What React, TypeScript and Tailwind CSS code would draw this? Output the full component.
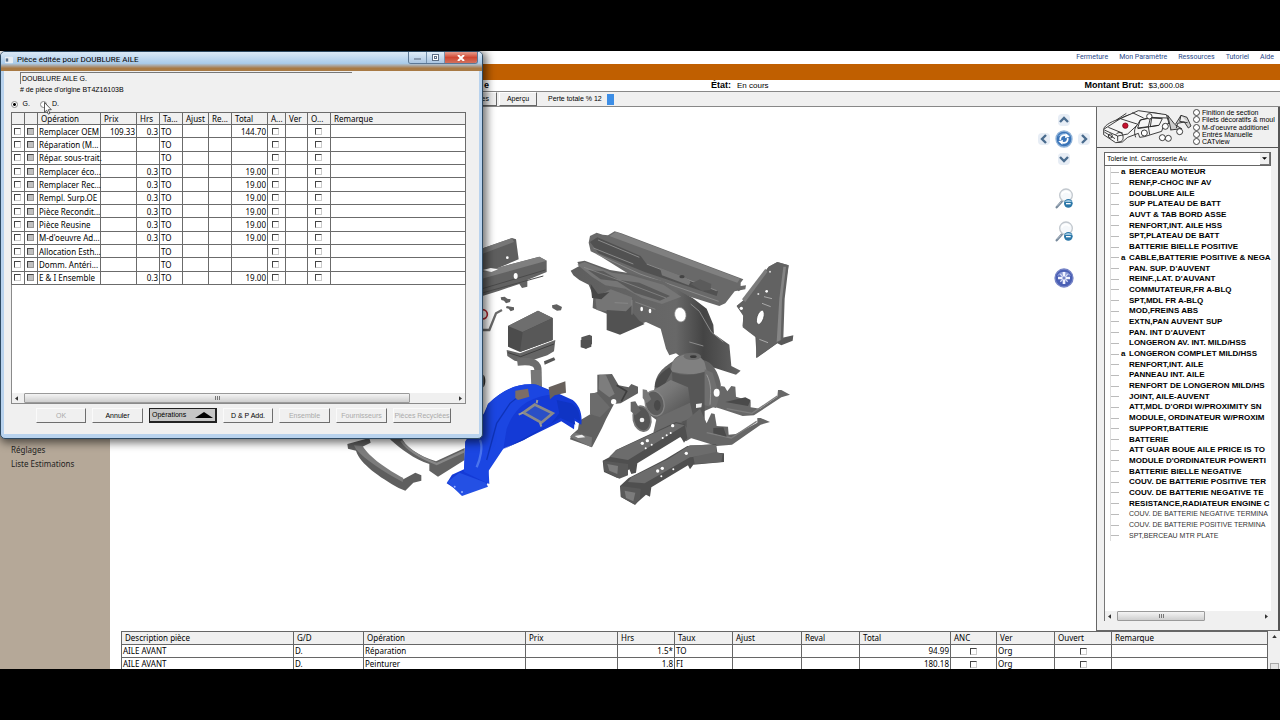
import type { ReactNode } from "react";

const SANS = "font-['Noto_Sans','Liberation_Sans',sans-serif]";
const ARIAL = "font-['Liberation_Sans',Arial,sans-serif]";

type Op = { name: string; prix?: string; hrs?: string; total?: string };

const operations: Op[] = [
  { name: "Remplacer OEM", prix: "109.33", hrs: "0.3", total: "144.70" },
  { name: "Réparation (M..." },
  { name: "Répar. sous-trait." },
  { name: "Remplacer éco...", hrs: "0.3", total: "19.00" },
  { name: "Remplacer Rec...", hrs: "0.3", total: "19.00" },
  { name: "Rempl. Surp.OE", hrs: "0.3", total: "19.00" },
  { name: "Pièce Recondit...", hrs: "0.3", total: "19.00" },
  { name: "Pièce Reusine", hrs: "0.3", total: "19.00" },
  { name: "M-d'oeuvre Ad...", hrs: "0.3", total: "19.00" },
  { name: "Allocation Esth..." },
  { name: "Domm. Antéri..." },
  { name: "E & I Ensemble", hrs: "0.3", total: "19.00" },
];

const parts: { label: string; mark?: boolean; light?: boolean }[] = [
  { label: "BERCEAU MOTEUR", mark: true },
  { label: "RENF,P-CHOC INF AV" },
  { label: "DOUBLURE AILE" },
  { label: "SUP PLATEAU DE BATT" },
  { label: "AUVT & TAB BORD ASSE" },
  { label: "RENFORT,INT. AILE HSS" },
  { label: "SPT,PLATEAU DE BATT" },
  { label: "BATTERIE BIELLE POSITIVE" },
  { label: "CABLE,BATTERIE POSITIVE & NEGA", mark: true },
  { label: "PAN. SUP. D'AUVENT" },
  { label: "REINF.,LAT. D'AUVANT" },
  { label: "COMMUTATEUR,FR A-BLQ" },
  { label: "SPT,MDL FR A-BLQ" },
  { label: "MOD,FREINS ABS" },
  { label: "EXTN,PAN AUVENT SUP" },
  { label: "PAN. INT D'AUVENT" },
  { label: "LONGERON AV. INT. MILD/HSS" },
  { label: "LONGERON COMPLET MILD/HSS", mark: true },
  { label: "RENFORT,INT. AILE" },
  { label: "PANNEAU INT. AILE" },
  { label: "RENFORT DE LONGERON MILD/HS" },
  { label: "JOINT, AILE-AUVENT" },
  { label: "ATT,MDL D'ORDI W/PROXIMITY SN" },
  { label: "MODULE, ORDINATEUR W/PROXIM" },
  { label: "SUPPORT,BATTERIE" },
  { label: "BATTERIE" },
  { label: "ATT GUAR BOUE AILE PRICE IS TO" },
  { label: "MODULE D'ORDINATEUR POWERTI" },
  { label: "BATTERIE BIELLE NEGATIVE" },
  { label: "COUV. DE BATTERIE POSITIVE TER" },
  { label: "COUV. DE BATTERIE NEGATIVE TE" },
  { label: "RESISTANCE,RADIATEUR ENGINE C" },
  { label: "COUV. DE BATTERIE NEGATIVE TERMINA", light: true },
  { label: "COUV. DE BATTERIE POSITIVE TERMINA", light: true },
  { label: "SPT,BERCEAU MTR PLATE", light: true },
];

const lines = [
  { part: "AILE AVANT", side: "D.", op: "Réparation", hrs: "1.5*", rate: "TO", total: "94.99" },
  { part: "AILE AVANT", side: "D.", op: "Peinturer", hrs: "1.8", rate: "FI", total: "180.18" },
];

function Tick({ label, shaded }: { label: string; shaded?: boolean }) {
  return (
    <input
      type="checkbox"
      aria-label={label}
      className={
        shaded
          ? "block size-[7px] appearance-none border border-[#444] border-r-[#999] border-b-[#999] bg-[#c0c0c0]"
          : "block size-[7px] appearance-none border border-[#444] border-r-[#ccc] border-b-[#ccc] bg-white"
      }
    />
  );
}

function ScrollBar({ thumb }: { thumb: string }) {
  return (
    <div className="flex h-[10px] items-center bg-[#f0f0f0] px-[3px]">
      <svg viewBox="0 0 4 6" className="h-[5px] w-[3px]"><path d="M4 0 0 3l4 3z" fill="#333" /></svg>
      <div className="mx-[6px] flex h-full flex-1">
        <div className={`flex h-full items-center justify-center gap-px rounded-[1px] border border-[#9a9a9a] bg-linear-to-b from-[#f4f4f4] to-[#cfcfcf] ${thumb}`}>
          <span className="h-[4px] w-px bg-[#777]" />
          <span className="h-[4px] w-px bg-[#777]" />
          <span className="h-[4px] w-px bg-[#777]" />
        </div>
      </div>
      <svg viewBox="0 0 4 6" className="h-[5px] w-[3px]"><path d="m0 0 4 3-4 3z" fill="#333" /></svg>
    </div>
  );
}

function PushButton({ width, disabled, children }: { width: string; disabled?: boolean; children: ReactNode }) {
  return (
    <button
      type="button"
      disabled={disabled}
      className={`h-[15px] border border-[#fafafa] border-r-[#6e6e6e] border-b-[#6e6e6e] bg-[#f0f0f0] text-center text-[7px] leading-[12px] whitespace-nowrap text-black disabled:text-[#aaa] ${width}`}
    >
      {children}
    </button>
  );
}

function EditDialog() {
  return (
    <section
      role="dialog"
      aria-label="Pièce éditée pour DOUBLURE AILE"
      className="absolute top-0 left-0 flex h-[388px] w-[483px] flex-col rounded-[5px] border border-[#2e4a63] bg-[#b9d3ee] px-[3px] pb-[4px] shadow-[2px_2px_8px_2px_rgba(0,0,0,0.55)]"
    >
      <header className="-mx-[3px] flex h-[19px] items-start rounded-t-[4px] bg-linear-to-b from-[#dbe9f6] from-0% via-[#a9cbea] via-60% to-[#a87a45] to-85% pr-[4px] pl-[4px]">
        <div className="flex flex-1 items-center gap-[4px] pt-[2px] font-['Roboto','Noto_Sans',sans-serif] text-[8px] leading-[12px] text-black">
          <svg viewBox="0 0 10 8" className="h-[8px] w-[8px]">
            <rect width="10" height="8" rx="1" fill="#e8eef4" />
            <rect x="1" y="2" width="3" height="4" fill="#56708c" />
          </svg>
          Pièce éditée pour DOUBLURE AILE
        </div>
        <div className="flex h-[12px] overflow-hidden rounded-b-[3px] border border-t-0 border-[#5c7896]">
          <button type="button" aria-label="Réduire" className="flex w-[18px] items-end justify-center border-r border-[#7591ad] bg-linear-to-b from-[#e0ecf7] to-[#aac6e2] pb-[3px]">
            <span className="h-[2px] w-[7px] border border-[#8a9bb0] bg-white" />
          </button>
          <button type="button" aria-label="Agrandir" className="flex w-[18px] items-center justify-center border-r border-[#7591ad] bg-linear-to-b from-[#e0ecf7] to-[#aac6e2]">
            <span className="flex size-[7px] items-center justify-center border border-[#5d6f86] bg-white"><span className="size-[3px] border border-[#5d6f86]" /></span>
          </button>
          <button type="button" aria-label="Fermer" className="flex w-[32px] items-center justify-center bg-linear-to-b from-[#e59a8c] via-[#cf4632] to-[#d1705c]">
            <svg viewBox="0 0 8 6" className="h-[6px] w-[8px]"><path d="m1 0 6 6M7 0 1 6" stroke="#fff" strokeWidth="2" /></svg>
          </button>
        </div>
      </header>

      <div className={`flex min-h-0 flex-1 flex-col bg-[#f0f0f0] pr-[13px] pl-[7px] text-[7px] text-black ${ARIAL}`}>
        <div className="mt-px ml-[9px] flex w-[332px] flex-col">
          <p className="h-[12px] border-t border-l border-[#777] pl-px leading-[12px]">DOUBLURE AILE G.</p>
          <p className="h-[12px] leading-[12px]"># de pièce d'origine BT4Z16103B</p>
        </div>
        <div className="relative flex h-[16px] items-center gap-[10px]">
          <label className="flex w-[19px] items-center justify-between">
            <input type="radio" name="side" defaultChecked className="size-[7px] appearance-none rounded-full border border-[#888] bg-white bg-[radial-gradient(#000_35%,transparent_45%)]" />
            G.
          </label>
          <label className="flex w-[19px] items-center justify-between">
            <input type="radio" name="side" className="size-[7px] appearance-none rounded-full border border-[#888] bg-white" />
            D.
          </label>
          <svg viewBox="0 0 8 13" className="absolute top-[6px] left-[33px] h-[13px] w-[8px]">
            <path d="M.5.5v9.7l2.2-2 1.6 3.9 1.6-.7-1.6-3.7h3z" fill="#fff" stroke="#333" strokeWidth=".8" />
          </svg>
        </div>

        <div className="flex h-[292px] flex-col bg-white">
          <table className={`h-[173px] w-full table-fixed border-collapse text-[8px] leading-[11px] ${SANS}`}>
            <colgroup>
              <col className="w-[13px]" /><col className="w-[13px]" /><col className="w-[63px]" />
              <col className="w-[36px]" /><col className="w-[23px]" /><col className="w-[23px]" />
              <col className="w-[26px]" /><col className="w-[23px]" /><col className="w-[36px]" />
              <col className="w-[18px]" /><col className="w-[22px]" /><col className="w-[23px]" /><col />
            </colgroup>
            <thead>
              <tr className="bg-[#f0f0f0] text-left [&>th]:border [&>th]:border-[#6b6b6b] [&>th]:p-0 [&>th]:pl-[3px] [&>th]:font-normal [&>th]:whitespace-nowrap">
                <th /><th /><th>Opération</th><th>Prix</th><th>Hrs</th><th>Ta...</th><th>Ajust</th><th>Re...</th><th>Total</th><th>A...</th><th>Ver</th><th>O...</th><th>Remarque</th>
              </tr>
            </thead>
            <tbody>
              {operations.map((o) => (
                <tr key={o.name} className="[&>td]:border [&>td]:border-[#6b6b6b] [&>td]:p-0 [&>td]:px-px [&>td]:whitespace-nowrap">
                  <td><div className="pl-px"><Tick label={`Choisir ${o.name}`} /></div></td>
                  <td><div className="pl-px"><Tick label={`Inclure ${o.name}`} shaded /></div></td>
                  <td>{o.name}</td>
                  <td className="text-right">{o.prix}</td>
                  <td className="text-right">{o.hrs}</td>
                  <td>TO</td>
                  <td /><td />
                  <td className="text-right">{o.total}</td>
                  <td><div className="pl-[3px]"><Tick label={`ANC ${o.name}`} /></div></td>
                  <td />
                  <td><div className="pl-[6px]"><Tick label={`Ouvert ${o.name}`} /></div></td>
                  <td />
                </tr>
              ))}
            </tbody>
          </table>
          <div className="flex flex-1 flex-col justify-end border-x border-b border-[#8a8a8a]"><ScrollBar thumb="w-[90%]" /></div>
        </div>

        <div className="mt-[4px] flex gap-[6px] pl-[25px]">
          <PushButton width="w-[50px]" disabled>OK</PushButton>
          <PushButton width="w-[51px]">Annuler</PushButton>
          <button type="button" className="flex h-[15px] w-[68px] items-center justify-between border border-r-2 border-b-2 border-[#222] bg-[#c6c6c6] px-[2px] text-[7px] leading-[12px]">
            Opérations
            <svg viewBox="0 0 18 6" className="h-[6px] w-[18px]"><path d="M0 6 9 0l9 6z" /></svg>
          </button>
          <PushButton width="w-[50px]">D &amp; P Add.</PushButton>
          <PushButton width="w-[51px]" disabled>Ensemble</PushButton>
          <PushButton width="w-[51px]" disabled>Fournisseurs</PushButton>
          <PushButton width="w-[58px]" disabled>Pièces Recyclées</PushButton>
        </div>
      </div>
    </section>
  );
}

function ExplodedView() {
  return (
    <svg viewBox="110 107 986 524" preserveAspectRatio="xMinYMin meet" className="absolute inset-0 size-full">
      <defs>
        <linearGradient id="steel" x1="0" y1="0" x2="0" y2="1">
          <stop offset="0" stopColor="#747474" /><stop offset="1" stopColor="#535353" />
        </linearGradient>
        <linearGradient id="cyl" x1="0" y1="0" x2="1" y2="1">
          <stop offset="0" stopColor="#868686" /><stop offset=".4" stopColor="#777" /><stop offset="1" stopColor="#4c4c4c" />
        </linearGradient>
        <linearGradient id="cowl" x1="0" y1="0" x2="1" y2="0">
          <stop offset="0" stopColor="#5e5e5e" /><stop offset=".62" stopColor="#686868" /><stop offset=".78" stopColor="#444" /><stop offset="1" stopColor="#646464" />
        </linearGradient>
      </defs>

      {/* upper cowl, dash panel, battery and side bracket */}
      <g transform="translate(480 220) scale(.33333)">
        <path d="M0 88 96 54l12 4 8 60L40 150 0 158z" fill="#5e5e5e" />
        <path d="M0 88 96 54l6 12L0 104z" fill="#777" />
        <path d="M0 158 178 110l22 12v34l-58 24v20l-16 4-8-12-60 20-58 18z" fill="#626262" />
        <path d="M0 158 178 110l22 12L0 178z" fill="#7f7f7f" />
        <path d="M0 208 196 150M10 218l180-50" stroke="#4a4a4a" strokeWidth="3" />
        <circle cx="82" cy="113" r="4" fill="#fff" /><ellipse cx="107" cy="168" rx="6" ry="9" fill="#fff" />
        <path d="m8 150 24-6 22 4-20 8z" fill="#fff" />
        <path d="m62 232 12-2 8 6 10 2-2 8-12 4-6-8-8-2zM80 258l22 4v8l-10 4-6-8-8-2zM216 256l14-3 16 8-3 10-12 1-14-8z" fill="#606060" />
        <path d="M0 330h28l20-50 18-10" fill="none" stroke="#6a6a6a" strokeWidth="7" />
        <circle cx="8" cy="283" r="14" fill="none" stroke="#b0242d" strokeWidth="5" />

        <path d="m326 68 4-20 20-10 18 6 16 2 20-12 20 6 366 138-8 10v10l16-2-2 12-32 6-28 36-18 8-88-28-180-66-96-60-22-10z" fill="#696969" />
        <path d="m388 48 20-12 372 140-8 12-140-50z" fill="#808080" />
        <path d="m330 66 22-14 130 56 16 22 120 48 96 36-4 14-216-72-138-56z" fill="#515151" />
        <path d="m354 60 124 52M340 84l120 48M500 132l210 80M350 102l130 60 236 82" fill="none" stroke="#8a8a8a" strokeWidth="3" />
        <path d="m540 144 78 30 14 12-6 10-80-30z" fill="#777" />
        <path d="m632 192 28-14 34 14-2 18-26 2z" fill="#5b5b5b" />
        <ellipse cx="606" cy="170" rx="8" ry="5" fill="#444" /><path d="m770 208 26-10-20 16z" fill="#666" />

        <path d="m272 152 26-14-6-12 22-4 76 28 60 10 100 24 58 34 30 16 42 32 20 48 2 28 46 32 6 64 28 14-14 12-70-22-60-22-10 10-40-30-20 6-10-20-16-60-44-20-72 26-42-14-2-36-44-18 2-36-14-34-28-14-18-14z" fill="url(#cowl)" />
        <path d="m292 134 22-8 82 32 56 8 98 28 54 36-58 22-60-18-50-28-60-10-40-26z" fill="#767676" />
        <path d="m324 150 46 4 48 26 60 8 92 40-30 14-76-24-52-34-50-6z" fill="#5a5a5a" />
        <path d="m346 232 46-24 64 24v26l-22 22-84-10z" fill="#757575" />
        <path d="m380 270 58 4 18-18 2 22 20 24 16 10-74 32-40-14z" fill="#525252" />
        <path d="m332 192 22 30 34-6-24 22-28-4z" fill="#474747" />
        <path d="m404 248 40 2M312 142l120 44 126 48M456 240v44M466 246l60 22" fill="none" stroke="#909090" strokeWidth="2" />
        <ellipse cx="601" cy="284" rx="17" ry="22" transform="rotate(-12 601 284)" fill="#fff" stroke="#888" strokeWidth="2" />
        <ellipse cx="485" cy="267" rx="4" ry="7" fill="#fff" /><ellipse cx="510" cy="273" rx="4" ry="7" fill="#fff" />
        <path d="m628 366 42 12M632 252l26 22 36 62 36 30" fill="none" stroke="#8c8c8c" strokeWidth="3" />

        <path d="m770 258 26-22 70-96 26-14 34 10-6 34-12 66-4 118 36-8-2 16-34 14-12-6-62 44-4-66-18-12-20-18 2-34z" fill="url(#steel)" />
        <path d="m770 258 26-22 70-96 26-14 34 10-12 100-4 120-82 58 2-60-42-32 2-34z" fill="#626262" />
        <path d="m918 140-12 100-4 120-12 6 8-130 12-96z" fill="#858585" />
        <path d="m856 146-70 92 10 8 66-90z" fill="#7c7c7c" />
        <ellipse cx="841" cy="292" rx="10" ry="22" transform="rotate(18 841 292)" fill="#fff" stroke="#444" strokeWidth="2" />
        <circle cx="860" cy="214" r="4" fill="#fff" /><circle cx="835" cy="222" r="3" fill="#ddd" /><circle cx="784" cy="265" r="5" fill="#fff" /><circle cx="870" cy="155" r="3" fill="#ddd" />
        <path d="m846 250 26 10M852 230l24 6M838 358l26 10" stroke="#aaa" strokeWidth="3" />

        <path d="m84 318 90-46 44 22v66l-98 36-36-16z" fill="#4c4c4c" />
        <path d="m84 318 90-46 44 22-90 42z" fill="#6e6e6e" /><path d="m128 336 90-42v66l-98 36z" fill="#585858" />
        <path d="m80 390 40 10 106-40-4 34-20 12-68 22-30-6-22-14z" fill="#656565" />
        <path d="m84 398 38 12 100-38" fill="none" stroke="#3f3f3f" strokeWidth="3" />
        <path d="M112 426c50-6 64 6 62 30v60" fill="none" stroke="#6c6c6c" strokeWidth="22" />
        <path d="m192 424 30-12 4 8-32 14zM304 352l24-8 8 4v24l-18 14-14-6z" fill="#565656" />
      </g>

      {/* strut tower, rails and brackets */}
      <g transform="translate(560 340) scale(.33333)">
        <path d="M62 0h32v20l-16 6-16-4z" fill="#505050" />
        <path d="m112 104 44-2 20 34 30 6 8-10 20 8v20l-52 30-20 2-24 46-12 26-30 58-66-24 4-12 20-18 4-26 34-20-2-58 22-8z" fill="#606060" />
        <path d="m118 104 20 2 26 56-16 10-32-24z" fill="#7d7d7d" /><path d="m90 160 20-2 40 44-30 30-30-10z" fill="#6c6c6c" />
        <path d="m30 290 14-12 52 14-2 30z" fill="#787878" />
        <circle cx="161" cy="185" r="8" fill="#fff" /><path d="m44 288 22-4 10 8-22 2z" fill="#eee" /><path d="m170 136 30 18-16 30" fill="none" stroke="#3e3e3e" strokeWidth="5" />
        <path d="M284 142c2-50 40-66 56-80 20-30 70-30 88-2 30 4 48 40 54 72l4 58-54 24-4 60-50 30-110-80z" fill="#646464" />
        <path d="m432 186 46-36 6-12 10 2 8 14 12-16 12 2 2 30 44 14v18l28 4 52-36 2-20h10l26 14-26 8-82 54-34 2-66-22-50-14z" fill="#686868" />
        <path d="M336 72c10-36 82-40 98-4l6 24c-30 14-74 12-108 2z" fill="#808080" />
        <ellipse cx="397" cy="49" rx="26" ry="11" fill="#6a6a6a" /><ellipse cx="400" cy="50" rx="10" ry="4" fill="#3a3a3a" />
        <path d="M336 96c30 12 60 12 98 0v140l-50 30-40-40z" fill="#565656" />
        <path d="m434 88 24 10 20 72-10 34-34-8z" fill="#6f6f6f" /><path d="M440 104c16 30 12 60 10 90" fill="none" stroke="#999" strokeWidth="3" />
        <ellipse cx="470" cy="158" rx="9" ry="12" fill="#fff" />
        <path d="M284 142c4-30 16-40 44-60l8 12-28 50z" fill="#4a4a4a" />
        <path d="m262 162 70-42 52 22 8 56-84 34z" fill="url(#cyl)" />
        <ellipse cx="284" cy="190" rx="28" ry="38" transform="rotate(-15 284 190)" fill="#5c5c5c" stroke="#858585" strokeWidth="4" />
        <ellipse cx="292" cy="196" rx="10" ry="16" fill="#494949" />
        <path d="m248 148 12 2 14 28-14 12-12-16z" fill="#777" />
        <path d="m290 234 100-46 10 44-120 46z" fill="#6b6b6b" />
        <ellipse cx="246" cy="236" rx="26" ry="38" transform="rotate(-12 246 236)" fill="#555" stroke="#777" strokeWidth="5" />
        <circle cx="246" cy="240" r="7" fill="#eee" /><path d="m212 186 14-2 16 28-16 14-14-12z" fill="#666" />
        <path d="m496 186 60-14 16 8-8 18z" fill="#4a4a4a" />
        <path d="m380 240 40-34 20 44 14-30 10 2 6 36 34 2 2 24 22-2 64-34v-14h10l28 12-28 8-86 60-46 4-90-28z" fill="#666" />
        <path d="m408 192 18-2-2 12-16 2z" fill="#eee" />
        <path d="m440 278 74 16 76-50M500 206l76 14 76-52" fill="none" stroke="#7e7e7e" strokeWidth="4" /><path d="m460 264 30-2 10 28-40-10z" fill="#4b4b4b" />

        <path d="m128 362 20-10 20-22 180-84 26 6 8 42-10 14-10-18-130 80-4 28-14 4-6-14-36 26-40-18z" fill="#4f4f4f" />
        <path d="m148 350 22-20 178-80 26 6-170 104z" fill="#6c6c6c" />
        <path d="m130 362 74 10v34l-26 10-46-24z" fill="#595959" /><path d="m142 372 32 6-2 24-24-10z" fill="#7c7c7c" />
        <g fill="#fff"><circle cx="247" cy="310" r="5" /><circle cx="262" cy="302" r="5" /><circle cx="338" cy="257" r="5" /><circle cx="257" cy="325" r="3" /><circle cx="275" cy="314" r="3" /><circle cx="308" cy="294" r="3" /><circle cx="320" cy="286" r="3" /><circle cx="332" cy="279" r="3" /></g>
        <path d="m180 438 26-24 110-56 66-40 86-6 4 26 20 2v26l-92 8-10 14-6-12-110 66-4 28-12-6-34 30-42-24z" fill="#4f4f4f" />
        <path d="m204 426 10-14 110-54 66-42 78-2 2 30-80 8-136 78z" fill="#6c6c6c" />
        <path d="m182 438 60 8-2 30-14 18-42-22z" fill="#595959" /><path d="m194 452 32 6-6 26-22-10z" fill="#7c7c7c" />
        <path d="m400 350 68-14 20 6-4 24-80 6z" fill="#636363" />
        <g fill="#fff"><circle cx="293" cy="393" r="5" /><circle cx="307" cy="385" r="5" /><circle cx="379" cy="340" r="5" /><circle cx="304" cy="409" r="3" /><circle cx="340" cy="388" r="3" /></g>
      </g>

      {/* highlighted inner fender and sub-frame */}
      <g transform="translate(340 370) scale(.33333)">
        <path d="m22 222 66-18 4 14-28 14c20 34 80 74 126 96l36-20 18 8v16l-24 6-24 24-20-8C120 322 60 282 48 242l-24-6z" fill="#5e5e5e" />
        <path d="m42 226 26 2c20 34 76 72 122 96l-2 12C130 306 74 268 48 238z" fill="#7c7c7c" />
        <path d="m150 208 34-8c10 30 50 56 104 74l86-40v36l-80 50-26-18v-20c-46-14-84-44-118-74z" fill="#626262" />
        <path d="m184 212c20 30 60 52 106 70l82-38" fill="none" stroke="#888" strokeWidth="7" />
        <path d="M572 0h30l4 50-20 10-12-8z" fill="#777" />
        <path d="m432 130 12-28c50-50 100-64 146-58l60 24 48 22c20 16 30 40 26 74l-20-12-2 26-38-24-122 60-80 34-14 24-6 70-76 28-46-30 16-26 36-16 4-84z" fill="#143ad6" />
        <path d="M444 102c50-50 100-64 146-58l58 28c-70 6-120 30-148 104l-10 60-44 66 2 40-76-36 4-90 60-86z" fill="#1b46e2" />
        <path d="m560 60-50 40-40 60-30 110" fill="none" stroke="#0f33b8" strokeWidth="4" />
        <path d="m420 210c10 20 0 60-10 82" fill="none" stroke="#4a74ee" strokeWidth="7" />
        <path d="m484 240 20-10 130-70 24-30-8-40 44 10c20 12 26 30 26 54l-18-10 4 20-44-20-110 66-68 30z" fill="#0f34c4" />
        <path d="m322 336 36-28 80 30 6 12-78 28z" fill="#2450e4" /><circle cx="344" cy="350" r="3" fill="#9bb4ff" /><circle cx="366" cy="366" r="3" fill="#9bb4ff" />
        <path d="m550 128 34-24 54 26-34 28z" fill="#2a4fc6" stroke="#8a8a8a" strokeWidth="8" />
        <path d="m550 128-14 6M590 100l2-10M600 158l4 12" stroke="#999" strokeWidth="6" />
        <path d="m526 62 38-6 4 24-34 10-8-6z" fill="#7b6d66" /><path d="m626 52 50-18 2 34-34 8-14 12z" fill="#68615c" />
        <path d="M430 14c8 6 8 30 0 38z" fill="#333" />
      </g>
    </svg>
  );
}

function Chevron({ d, label }: { d: string; label: string }) {
  return (
    <button type="button" aria-label={label} className="flex size-[12px] items-center justify-center rounded-[4px] bg-[#e7edf5]">
      <svg viewBox="0 0 12 12" className="size-[12px]"><path d={d} fill="none" stroke="#4a6c8e" strokeWidth="2.4" /></svg>
    </button>
  );
}

function Magnifier({ label }: { label: string }) {
  return (
    <button type="button" aria-label={label} className="h-[22px] w-[20px]">
      <svg viewBox="0 0 60 66" className="h-[22px] w-[20px]">
        <path d="M8 58 24 40" stroke="#77899b" strokeWidth="7" strokeLinecap="round" />
        <path d="M9 55 22 41" stroke="#c3ccd6" strokeWidth="2" />
        <circle cx="36" cy="22" r="19" fill="#f5f8fb" stroke="#c2c8ce" strokeWidth="4" />
        <path d="M23 20c4-10 16-12 24-4" fill="none" stroke="#fff" strokeWidth="5" />
        <circle cx="43" cy="46" r="13" fill="#2b77a8" />
        <path d="M32 42a12 10 0 0 1 22 0z" fill="#9dc8e2" />
        <path d="M36 47h14" stroke="#fff" strokeWidth="4" />
      </svg>
    </button>
  );
}

function ViewControls() {
  return (
    <nav aria-label="Navigation du dessin" className="absolute top-[7px] right-[6px] flex w-[52px] flex-col items-center">
      <Chevron label="Haut" d="m2 8 4-4 4 4" />
      <div className="mt-[4px] mb-[5px] flex w-full items-center justify-between">
        <Chevron label="Gauche" d="M8 2 4 6l4 4" />
        <button type="button" aria-label="Recentrer" className="size-[18px]">
          <svg viewBox="0 0 54 54" className="size-[18px]">
            <circle cx="27" cy="27" r="24" fill="#3a74b8" stroke="#8fb2d8" strokeWidth="4" />
            <path d="M8 20a22 20 0 0 1 38 0c-12-6-26-6-38 0z" fill="#86b0de" />
            <path d="M16 30c-2-12 10-18 20-12M38 24c2 12-8 18-20 12" fill="none" stroke="#fff" strokeWidth="5" />
            <path d="m32 10 12 10-14 4zM22 44 10 34l14-4z" fill="#fff" />
          </svg>
        </button>
        <Chevron label="Droite" d="m4 2 4 4-4 4" />
      </div>
      <Chevron label="Bas" d="m2 4 4 4 4-4" />
      <div className="mt-[23px] flex flex-col items-center gap-[11px]">
        <Magnifier label="Zoom avant" />
        <Magnifier label="Zoom arrière" />
      </div>
      <button type="button" aria-label="Ajuster" className="mt-[25px] size-[20px]">
        <svg viewBox="0 0 60 60" className="size-[20px]">
          <circle cx="30" cy="30" r="27" fill="#4a5fb4" stroke="#7684c6" strokeWidth="4" />
          <path d="M9 24a23 22 0 0 1 42 0c-14-6-28-6-42 0z" fill="#8b9ad6" />
          <path d="M30 12v36M12 30h36" stroke="#f2f4ff" strokeWidth="8" />
          <path d="m19 19 7 7M41 19l-7 7M19 41l7-7M41 41l-7-7" stroke="#d5dbf4" strokeWidth="4" />
          <path d="M30 25v10M25 30h10" stroke="#4a5fb4" strokeWidth="3" />
        </svg>
      </button>
    </nav>
  );
}

function CarDiagram() {
  return (
    <svg viewBox="252 198 270 105" className="h-[35px] w-[90px] shrink-0" fill="none" stroke="#222" strokeWidth="2.6">
      <path d="M254 256c2-14 30-26 50-32 20-12 50-20 84-18 24 0 44 4 54 14l8 18" fill="#f6f6f6" />
      <path d="M254 256v16l36 24 20-2 16-14 32-12 4 12 14-2 52-16 6-18 16-6-8-26-84-12-54 24z" fill="#f6f6f6" />
      <path d="m256 258 40 18 30-6 28-26 10-16 30-8 50 2M304 224l50 16M296 276v16M256 264l32 20M268 250l44 18" />
      <path d="M354 244c-10 10-8 24-4 36M364 228l-8 24 32-4 6-26zM398 222l-4 26 26-4 10-20zM356 254l62-10M388 248l4 24" />
      <path d="M290 272c8-10 20-8 22 4s-4 18-14 18M322 208l-30 20M340 206l34 16" />
      <circle cx="274" cy="276" r="6" /><circle cx="391" cy="217" r="8" fill="#fff" />
      <circle cx="376" cy="267" r="9" fill="#fff" /><circle cx="439" cy="247" r="9" fill="#fff" />
      <circle cx="430" cy="281" r="9" fill="#fff" /><circle cx="448" cy="283" r="9" fill="#fff" />
      <path d="m446 214 22 28 20 12-34 4M446 214l10 44M470 240l16-26 18 6 12 26-8 6-12-18-20 4-4 14M486 214l-4 18 24 4" fill="#ccc" />
      <circle cx="482" cy="263" r="9" fill="#fff" />
      <circle cx="319" cy="245" r="8" fill="#c8102e" stroke="#7e0a1c" />
    </svg>
  );
}

function PartsPanel() {
  const modes = ["Finition de section", "Filets décoratifs & moul", "M-d'oeuvre additionel", "Entrés Manuelle", "CATview"];
  return (
    <aside className={`flex w-[184px] shrink-0 flex-col overflow-hidden border-r-2 border-b border-l border-[#666] border-r-[#555] bg-[#f0f0f0] text-[8px] text-black ${ARIAL}`}>
      <div className="flex h-[41px] shrink-0 items-center border-b border-[#555] pl-[6px]">
        <CarDiagram />
        <div className="flex h-[37px] shrink-0 flex-col">
          {modes.map((m) => (
            <label key={m} className="flex min-h-0 flex-1 items-center gap-[2px] text-[7px] leading-[7px] whitespace-nowrap">
              <input type="radio" name="mode" className="size-[7px] appearance-none rounded-full border border-[#444] bg-white" />
              {m}
            </label>
          ))}
        </div>
      </div>
      <div className="flex min-h-0 flex-1 flex-col pt-[4px] pr-[7px] pb-[9px] pl-[7px]">
        <div className="relative">
          <select aria-label="Section" className="block h-[14px] w-full appearance-none border border-[#666] bg-white pl-[2px] text-[7px] leading-[12px]">
            <option>Tolerie int. Carrosserie Av.</option>
          </select>
          <span className="pointer-events-none absolute top-px right-px flex h-[12px] w-[10px] items-center justify-center border-r border-b border-[#777] bg-[#f0f0f0]">
            <svg viewBox="0 0 6 3" className="h-[3px] w-[5px]"><path d="M0 0h6L3 3z" /></svg>
          </span>
        </div>
        <div className="flex min-h-0 flex-1 flex-col border-l border-[#777] bg-white pt-px">
          <ul className="flex h-[374px] shrink-0 flex-col overflow-hidden">
            {parts.map((p, i) => (
              <li key={i} className="flex min-h-0 flex-1 items-center">
                <span className="ml-[5px] flex h-full w-[9px] shrink-0 items-center border-l border-[#ddd]"><span className="h-px w-full bg-[#bbb]" /></span>
                <span className="w-[10px] shrink-0 pl-[2px] text-[8px] leading-[10px] font-bold">{p.mark ? "a" : ""}</span>
                <a href="#" className={p.light ? "text-[7px] leading-[10px] whitespace-nowrap text-[#333]" : "leading-[10px] font-bold whitespace-nowrap"}>{p.label}</a>
              </li>
            ))}
          </ul>
          <div className="mt-auto"><ScrollBar thumb="w-[62%]" /></div>
        </div>
      </div>
    </aside>
  );
}

function EstimateTable() {
  return (
    <div className="flex h-[38px] shrink-0 overflow-hidden bg-[#f0f0f0]">
      <div className="w-[11px] shrink-0 bg-white" />
      <div className="flex-1">
        <table className={`w-full table-fixed border-collapse bg-white text-[8px] leading-[12px] text-black ${SANS}`}>
          <colgroup>
            <col className="w-[172px]" /><col className="w-[70px]" /><col className="w-[162px]" /><col className="w-[92px]" />
            <col className="w-[57px]" /><col className="w-[58px]" /><col className="w-[69px]" /><col className="w-[58px]" />
            <col className="w-[91px]" /><col className="w-[46px]" /><col className="w-[58px]" /><col className="w-[57px]" /><col />
          </colgroup>
          <thead>
            <tr className="bg-[#f0f0f0] text-left [&>th]:border [&>th]:border-[#666] [&>th]:p-0 [&>th]:pl-[3px] [&>th]:font-normal">
              <th>Description pièce</th><th>G/D</th><th>Opération</th><th>Prix</th><th>Hrs</th><th>Taux</th><th>Ajust</th><th>Reval</th><th>Total</th><th>ANC</th><th>Ver</th><th>Ouvert</th><th>Remarque</th>
            </tr>
          </thead>
          <tbody>
            {lines.map((l) => (
              <tr key={l.op} className="[&>td]:border [&>td]:border-[#666] [&>td]:p-0 [&>td]:px-px">
                <td>{l.part}</td><td>{l.side}</td><td>{l.op}</td><td />
                <td className="text-right">{l.hrs}</td><td>{l.rate}</td><td /><td />
                <td className="text-right">{l.total}</td>
                <td><div className="flex justify-center"><Tick label={`ANC ${l.op}`} /></div></td>
                <td>Org</td>
                <td><div className="flex justify-center"><Tick label={`Ouvert ${l.op}`} /></div></td>
                <td />
              </tr>
            ))}
          </tbody>
        </table>
      </div>
      <div className="flex w-[12px] shrink-0 flex-col items-center justify-between pt-[4px]">
        <svg viewBox="0 0 6 4" className="h-[3px] w-[5px]"><path d="M0 4 3 0l3 4z" fill="#333" /></svg>
        <span className="h-[6px] w-[9px] border border-b-0 border-[#aaa] bg-[#e6e6e6]" />
      </div>
    </div>
  );
}

export default function App() {
  return (
    <div className="flex h-screen flex-col bg-black py-[51px]">
      <main className={`relative flex min-h-0 flex-1 flex-col overflow-hidden bg-white text-[8px] text-black ${ARIAL}`}>
        <nav className="flex h-[13px] shrink-0 justify-end gap-[11px] pr-[6px] font-['Roboto','Liberation_Sans',sans-serif] text-[7px] leading-[13px] text-[#1f4788]">
          <a href="#">Fermeture</a>
          <a href="#">Mon Paramètre</a>
          <a href="#">Ressources</a>
          <a href="#">Tutoriel</a>
          <a href="#">Aide</a>
        </nav>
        <div className="h-[16px] shrink-0 bg-[#c05f00]" />
        <div className="flex h-[11px] shrink-0 items-center pr-[96px] pl-[484px] text-[8px] leading-[11px]">
          <b className="w-[227px] text-[9px]">e</b>
          <p className="flex-1"><b className="mr-[6px] text-[9px]">État:</b>En cours</p>
          <p><b className="mr-[5px] text-[9px]">Montant Brut:</b>$3,600.08</p>
        </div>
        <div className="flex h-[16px] shrink-0 items-center border-y border-[#888] bg-[#f0f0f0] pl-[460px] text-[7px]">
          <button type="button" className="h-[14px] w-[37px] border border-white border-r-[#666] border-b-[#666] pr-[7px] text-right leading-[12px]">es</button>
          <button type="button" className="ml-[2px] h-[14px] w-[38px] border border-white border-r-[#666] border-b-[#666] leading-[12px]">Aperçu</button>
          <label htmlFor="loss" className="ml-[11px] w-[59px] whitespace-nowrap">Perte totale % 12</label>
          <div id="loss" role="progressbar" aria-valuenow={12} className="h-[11px] w-[62px]"><div className="h-full w-[12%] bg-[#3d8ee6]" /></div>
        </div>
        <div className="flex min-h-0 flex-1">
          <aside className={`flex w-[110px] shrink-0 flex-col bg-[#b5a898] pt-[336px] pl-[11px] leading-[14px] text-[#222] ${SANS}`}>
            <a href="#">Réglages</a>
            <a href="#">Liste Estimations</a>
          </aside>
          <div className="flex min-w-0 flex-1 flex-col">
            <div className="flex min-h-0 flex-1">
              <div className="relative min-w-0 flex-1 overflow-hidden">
                <ExplodedView />
                <ViewControls />
              </div>
              <PartsPanel />
            </div>
            <EstimateTable />
          </div>
        </div>
        <EditDialog />
      </main>
    </div>
  );
}
